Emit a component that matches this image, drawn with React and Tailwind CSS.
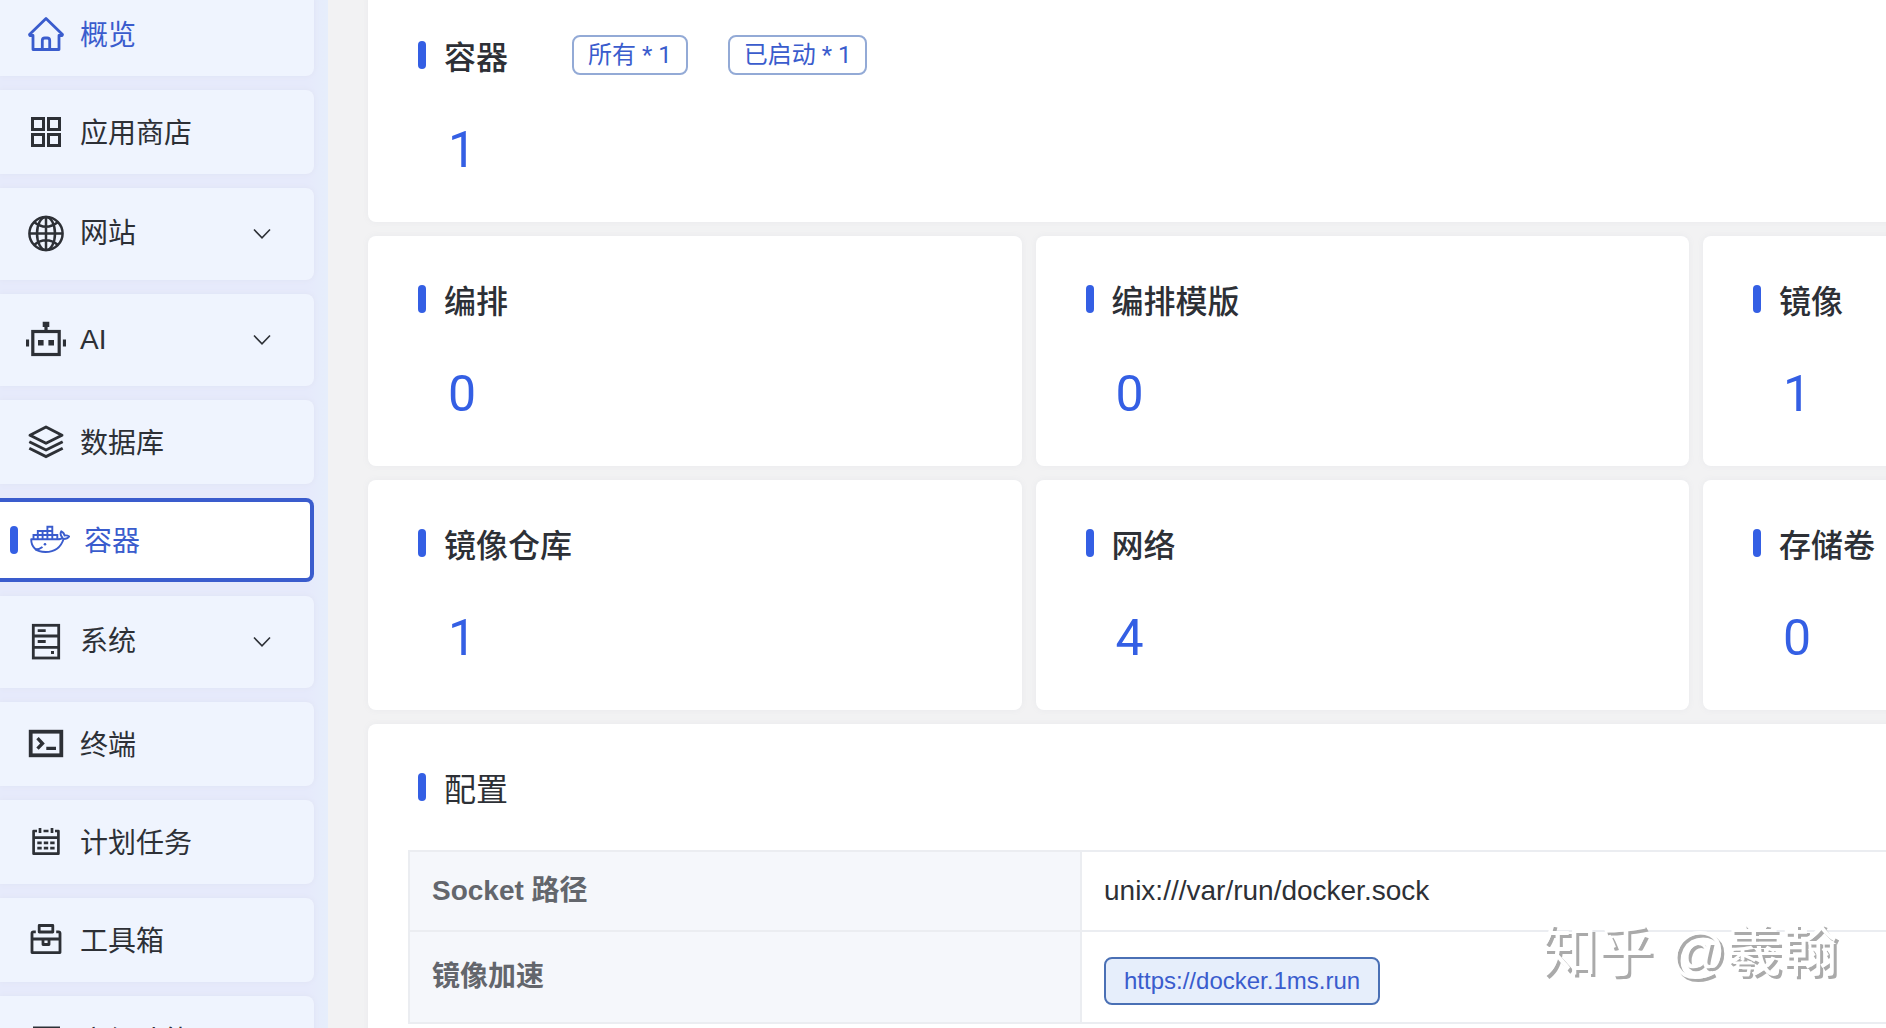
const fontStack = 'font-["Liberation_Sans","Noto_Sans_CJK_SC",sans-serif]';

function Icon({ children, width = 3 }) {
  return (
    <svg
      aria-hidden="true"
      className="size-10 shrink-0"
      viewBox="0 0 40 40"
      fill="none"
      stroke="currentColor"
      strokeWidth={width}
    >
      {children}
    </svg>
  );
}

const icons = {
  home: (
    <Icon width={2.8}>
      <path strokeLinejoin="round" d="M20 4.500 36.500 20.500 36 21.500H33V35.500H7V21.500H4L3.500 20.500Z" />
      <path d="M16.300 36V26.500q0-2.500 2.500-2.500h2.400q2.500 0 2.500 2.500V36" />
    </Icon>
  ),
  store: (
    <Icon width={3}>
      <path d="M6.500 6.500h11v11h-11zM22.500 6.500h11v11h-11zM6.500 22.500h11v11h-11zM22.500 22.500h11v11h-11z" />
    </Icon>
  ),
  globe: (
    <Icon width={2.5}>
      <circle cx="20" cy="19.500" r="16.600" />
      <ellipse cx="20" cy="19.500" rx="9" ry="16.600" />
      <path d="M20 3v34M3 19.500h34M8 8Q20 17.500 32 8M8 31Q20 21.500 32 31" />
    </Icon>
  ),
  robot: (
    <Icon width={3.2}>
      <rect x="6.800" y="11.500" width="26.400" height="23" />
      <path d="M20 11V5M1.500 19.500v7M38.500 19.500v7" />
      <path fill="currentColor" stroke="none" d="M16.700 1.700h6.600V7h-6.600zM12 20h5.600v5.500H12zM22.400 20H28v5.500h-5.600z" />
    </Icon>
  ),
  layers: (
    <Icon width={2.9}>
      <path strokeLinejoin="round" d="M20 5l16 8.300L20 21.300 4 13.300Z" />
      <path d="M3.300 19.700 20 28l16.700-8.300M3.300 26.300 20 34.600l16.700-8.300" />
    </Icon>
  ),
  docker: (
    <Icon width={1.9}>
      <path strokeLinejoin="round" d="M1.200 19.300H27.500c2.600 0 4.200-.6 5-1.700-2-1.800-2.300-4.300-1.200-6.300 2 1 3 2.400 3.200 4.200 1.600-.3 3.300 0 4.700 1-1.300 1.800-3.200 2.500-5.600 2.500C31 27 25 32 15.500 32 6 32 1.200 27 1.200 19.300Z" />
      <path d="M3.500 19.300V15h23.800v4.300M7.800 19.300v-8.300h14.500v8.300M12.600 19.300V11M17.400 19.300V6.800h4.900V11" />
      <circle cx="15" cy="24.300" r="1.300" fill="currentColor" stroke="none" />
      <path d="M5 29.500c3 0 5.500-.8 7.500-2.500" />
    </Icon>
  ),
  server: (
    <Icon width={2.8}>
      <rect x="7.300" y="3.300" width="25.400" height="32.700" />
      <path d="M7 14h26M7 25.300h26M11.700 8.700h8M11.700 19.500h8M25 30.500h3" />
    </Icon>
  ),
  terminal: (
    <Icon width={3.8}>
      <rect x="4.700" y="7.700" width="30.600" height="23.600" />
      <path strokeWidth="3.300" d="M11.500 14.200 16.500 19.500 11.500 24.700M20.300 24.400h9.700" />
    </Icon>
  ),
  calendar: (
    <Icon width={2.7}>
      <path strokeLinejoin="round" d="M11 9H7.600V31.700h24.800V9H29M17.500 9h5" />
      <path d="M14 6v5M26 6v5M7.500 15.700h25" />
      <path d="M11.300 20.800h4.400M17.800 20.800h4.400M24.200 20.800h4.400M11.300 26.200h4.400M17.800 26.200h4.400M24.200 26.200h4.400" />
    </Icon>
  ),
  toolbox: (
    <Icon width={2.8}>
      <path strokeLinejoin="round" d="M9.800 11.800H7.500q-1.500 0-1.500 1.500V32.600h28V13.300q0-1.500-1.500-1.500H30.200" />
      <path strokeLinejoin="round" d="M13.200 12V5.500h13.600V12ZM6 19h28M17 19v5.500h6v-5.500" />
    </Icon>
  ),
  advanced: (
    <Icon>
      <rect x="8.500" y="6" width="24" height="28" />
    </Icon>
  ),
};

const menu = [
  { label: "概览", icon: "home", current: true },
  { label: "应用商店", icon: "store" },
  { label: "网站", icon: "globe", sub: true },
  { label: "AI", icon: "robot", sub: true },
  { label: "数据库", icon: "layers" },
  { label: "容器", icon: "docker", active: true },
  { label: "系统", icon: "server", sub: true },
  { label: "终端", icon: "terminal" },
  { label: "计划任务", icon: "calendar" },
  { label: "工具箱", icon: "toolbox" },
  { label: "高级功能", icon: "advanced", sub: true },
];

function MenuItem({ item }) {
  if (item.active) {
    return (
      <a
        href="#container"
        aria-current="page"
        className="flex h-[84px] shrink-0 items-center rounded-r-lg border-4 border-l-0 border-[#3a5ccd] bg-white pl-2.5 text-[#3a5ccd]"
      >
        <span className="mr-3 h-7 w-2 rounded-full bg-[#345fe4]" />
        {icons[item.icon]}
        <span className="ml-3.5 pt-1">{item.label}</span>
      </a>
    );
  }
  const tone = item.current ? "text-[#3a5ccd]" : "text-[#2d3036]";
  if (item.sub) {
    return (
      <button
        type="button"
        className={`flex h-[92px] shrink-0 items-center rounded-r-lg bg-[#eff4fe] pr-[42px] pl-[26px] text-left shadow-[0_0_5px_#dfe3f3] ${tone}`}
      >
        {icons[item.icon]}
        <span className="ml-3.5 flex-1">{item.label}</span>
        <svg aria-hidden="true" className="h-3 w-5" viewBox="0 0 20 12" fill="none" stroke="currentColor" strokeWidth="1.6">
          <path d="M2 1.500 10 9.800 18 1.500" />
        </svg>
      </button>
    );
  }
  return (
    <a
      href="#"
      className={`flex h-[84px] shrink-0 items-center rounded-r-lg bg-[#eff4fe] pl-[26px] shadow-[0_0_5px_#dfe3f3] ${tone}`}
    >
      {icons[item.icon]}
      <span className="ml-3.5 pt-1">{item.label}</span>
    </a>
  );
}

function Heading({ children, light }) {
  return (
    <h2
      className={`flex items-center gap-[18px] text-[32px] leading-10 text-[#2d3036] ${light ? "font-normal" : "font-medium"}`}
    >
      <span className="mb-1.5 h-7 w-2 rounded-full bg-[#345fe4]" />
      {children}
    </h2>
  );
}

function Tag({ children }) {
  return (
    <button
      type="button"
      className='h-10 rounded-lg border-2 border-[#93aad6] px-3.5 font-["Roboto","Noto_Sans_CJK_SC",sans-serif] text-2xl leading-8 text-[#3a5ccd]'
    >
      {children}
    </button>
  );
}

function Card({ title, count, tags = [], wide }) {
  return (
    <section
      className={`h-[230px] rounded-lg bg-white px-[50px] pt-[46px] shadow-[0_0_6px_#e8e9ec] ${wide ? "col-span-3" : ""}`}
    >
      <div className="flex h-10 items-center">
        <Heading>{title}</Heading>
        {tags.length > 0 && (
          <div className="mb-1.5 ml-16 flex gap-10">
            {tags.map((t) => (
              <Tag key={t}>{t}</Tag>
            ))}
          </div>
        )}
      </div>
      <a
        href="#"
        className='mt-[42px] ml-[30px] inline-block font-["Roboto",sans-serif] text-[50px] leading-[60px] text-[#345fe4]'
      >
        {count}
      </a>
    </section>
  );
}

export default function App() {
  return (
    <div className={`flex h-screen overflow-hidden bg-[#f2f2f3] text-[28px] ${fontStack}`}>
      <nav className="flex w-[328px] shrink-0 flex-col overflow-hidden bg-[linear-gradient(to_right,#e6eafb_94%,#e6eefb)] pr-3.5">
        <div className="-mt-2 flex flex-col gap-3.5">
          {menu.map((item) => (
            <MenuItem key={item.label} item={item} />
          ))}
        </div>
      </nav>
      <main className="min-w-0 flex-1 overflow-hidden pl-10">
        <div className="-mt-2 grid w-[131%] grid-cols-3 gap-3.5">
          <Card wide title="容器" count="1" tags={["所有 * 1", "已启动 * 1"]} />
          <Card title="编排" count="0" />
          <Card title="编排模版" count="0" />
          <Card title="镜像" count="1" />
          <Card title="镜像仓库" count="1" />
          <Card title="网络" count="4" />
          <Card title="存储卷" count="0" />
          <section className="col-span-3 rounded-lg bg-white px-10 pt-[46px] pb-10 shadow-[0_0_6px_#e8e9ec]">
            <div className="pl-2.5">
              <Heading light>配置</Heading>
            </div>
            <table className="mt-10 w-full table-fixed border-collapse text-left">
              <tbody>
                <tr className="h-20">
                  <th scope="row" className="w-[672px] border-2 border-[#ebedf1] bg-[#f5f7fb] px-[22px] font-bold text-[#63666c]">
                    Socket 路径
                  </th>
                  <td className="border-2 border-[#ebedf1] px-[22px] text-[#2d3036]">unix:///var/run/docker.sock</td>
                </tr>
                <tr className="h-[92px]">
                  <th scope="row" className="border-2 border-[#ebedf1] bg-[#f5f7fb] px-[22px] font-bold text-[#63666c]">
                    镜像加速
                  </th>
                  <td className="border-2 border-[#ebedf1] px-[22px]">
                    <span className="mt-2 flex h-12 w-fit items-center rounded-lg border-2 border-[#4a70b5] bg-[#e6eefb] px-[18px] text-2xl text-[#3a5ccd]">
                      https://docker.1ms.run
                    </span>
                  </td>
                </tr>
              </tbody>
            </table>
          </section>
        </div>
      </main>
      <div className="pointer-events-none absolute right-12 bottom-10 text-[56px] leading-[72px] text-white [text-shadow:3px_3px_0_#aaa]">
        知乎 @羲翰
      </div>
    </div>
  );
}
